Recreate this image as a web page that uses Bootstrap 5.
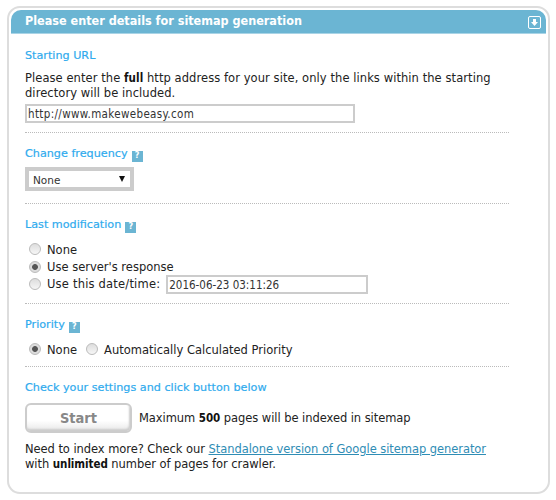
<!DOCTYPE html>
<html lang="en">
<head>
<meta charset="utf-8">
<title>Sitemap generation</title>
<link href="https://cdn.jsdelivr.net/npm/bootstrap@5.3.0/dist/css/bootstrap.min.css" rel="stylesheet">
<style>
html,body{background:#fff;}
body{font-family:"DejaVu Sans",Tahoma,sans-serif;font-size:11.5px;line-height:14.5px;color:#222;padding:6px 7px 0;}
b{font-family:"DejaVu Sans Condensed","DejaVu Sans",sans-serif;font-weight:700;color:#111;}
.panel-box{width:543px;height:488px;border:2px solid #ddd;border-radius:13px;padding:2px;background:#fff;overflow:hidden;}
.panel-head{height:24px;background:#6bb5d3;border-bottom:1px solid #a9d4e6;border-radius:10px 10px 0 0;padding:0 5px 0 14px;color:#fff;font-family:"DejaVu Sans Condensed","DejaVu Sans",sans-serif;font-weight:700;font-size:12.5px;}
.panel-body{padding:0 37px 0 14px;}
.sect{border-bottom:1px dotted #bbb;}
.sect-last{border-bottom:0;}
.sect-title{color:#2fabee;font-size:11.2px;font-weight:400;line-height:16px;margin:0;padding-top:13px;-webkit-text-stroke:.2px #2fabee;}
.sect-first{padding-top:14px;}
.help-sq{display:inline-flex;align-items:center;justify-content:center;width:11px;height:11px;background:#6bb5d3;color:#fff;-webkit-text-stroke:0;font-size:8px;font-weight:700;line-height:1;margin-left:4px;vertical-align:-1px;}
.expander{width:13px;height:13px;border:1px solid #fff;border-radius:2px;margin-top:2px;}
.url-input,.date-input{height:19px;border:2px solid #ccc;padding:0 1px;font-family:"DejaVu Sans Condensed","DejaVu Sans",sans-serif;font-size:11.5px;color:#333;background:#fff;outline:0;}
.url-input{display:block;width:330px;letter-spacing:.35px;}
.date-input{width:202px;}
.sel-box{width:109px;height:24px;border:4px solid #ccc;background:#fff;padding:3px 5px 0 4px;font-size:10.5px;color:#333;}
.sel-arrow{width:0;height:0;border-left:3.5px solid transparent;border-right:3.5px solid transparent;border-top:6px solid #111;margin-top:-4px;}
.radio-line{padding-left:4px;column-gap:6px;}
.radio-dot{appearance:none;-webkit-appearance:none;flex:none;width:12px;height:12px;margin:0 0 2px;border:1px solid #bbb;border-radius:50%;background:linear-gradient(#ddd,#f6f6f6);}
.radio-dot:checked{background:radial-gradient(circle,#555 0 2.5px,#dcdcdc 3.3px);}
.radio-next{margin-left:3px;}
.wide-label{letter-spacing:.2px;}
.para-wide{letter-spacing:.07px;}
.para-tight{letter-spacing:-.06px;}
.start-btn{width:107px;height:30px;border:2px solid #ccc;border-radius:6px;background:linear-gradient(#fff 60%,#e8e8e8);box-shadow:inset -1px -2px 2px #ccc;color:#888;font-family:"DejaVu Sans Condensed","DejaVu Sans",sans-serif;font-weight:700;font-size:14.5px;line-height:1;padding:0;}
.start-row{column-gap:7px;}
.panel-body a{color:#2f8db5;}
.s1{height:99px}.s2{height:71px}.s3{height:100px}.s4{height:63px}
.gap-7{padding-top:7px}.gap-9{padding-top:9px}
.mt-4px{margin-top:4px}.mt-5px{margin-top:5px}.mt-7px{margin-top:7px}
.line-18{margin-top:8px;height:18px}.line-17{height:17px}
</style>
</head>
<body>
<div class="panel-box">
  <div class="panel-head d-flex justify-content-between align-items-center">
    <span>Please enter details for sitemap generation</span>
    <span class="expander d-flex align-items-center justify-content-center">
      <svg width="9" height="9" viewBox="0 0 9 9"><path d="M3 1h3v3h2L4.500 8 1 4h2z" fill="#fff"/></svg>
    </span>
  </div>
  <div class="panel-body">
    <div class="sect s1">
      <h2 class="sect-title sect-first">Starting URL</h2>
      <p class="m-0 gap-7 para-wide">Please enter the <b>full</b> http address for your site, only the links within the starting directory will be included.</p>
      <input class="url-input mt-4px" type="text" value="http://www.makewebeasy.com">
    </div>
    <div class="sect s2">
      <h2 class="sect-title">Change frequency<span class="help-sq">?</span></h2>
      <div class="sel-box d-flex align-items-center justify-content-between mt-5px"><span>None</span><span class="sel-arrow"></span></div>
    </div>
    <div class="sect s3">
      <h2 class="sect-title">Last modification<span class="help-sq">?</span></h2>
      <div class="d-flex align-items-center radio-line line-18"><input class="radio-dot" type="radio" name="lm"><span>None</span></div>
      <div class="d-flex align-items-center radio-line line-17"><input class="radio-dot" type="radio" name="lm" checked><span>Use server's response</span></div>
      <div class="d-flex align-items-center radio-line line-17"><input class="radio-dot" type="radio" name="lm"><span class="wide-label">Use this date/time:</span><input class="date-input" type="text" value="2016-06-23 03:11:26"></div>
    </div>
    <div class="sect s4">
      <h2 class="sect-title">Priority<span class="help-sq">?</span></h2>
      <div class="d-flex align-items-center radio-line line-18"><input class="radio-dot" type="radio" name="pr" checked><span>None</span><input class="radio-dot radio-next" type="radio" name="pr"><span>Automatically Calculated Priority</span></div>
    </div>
    <div class="sect sect-last">
      <h2 class="sect-title">Check your settings and click button below</h2>
      <div class="d-flex align-items-center start-row mt-7px">
        <button class="start-btn" type="button">Start</button>
        <span class="para-tight">Maximum <b>500</b> pages will be indexed in sitemap</span>
      </div>
      <p class="m-0 gap-9 para-tight">Need to index more? Check our <a href="#">Standalone version of Google sitemap generator</a><br>with <b>unlimited</b> number of pages for crawler.</p>
    </div>
  </div>
</div>
<script src="https://cdn.jsdelivr.net/npm/bootstrap@5.3.0/dist/js/bootstrap.bundle.min.js"></script>
</body>
</html>
